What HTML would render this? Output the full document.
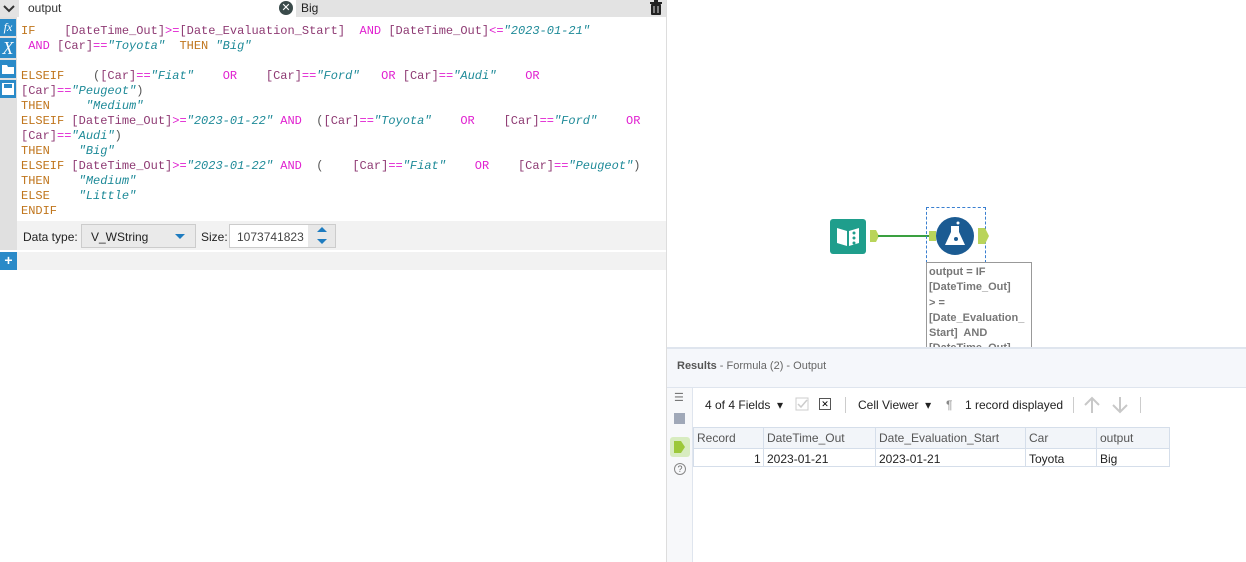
<!DOCTYPE html>
<html><head><meta charset="utf-8"><style>
*{margin:0;padding:0;box-sizing:border-box}
body{width:1246px;height:562px;overflow:hidden;background:#fff;font-family:"Liberation Sans",sans-serif;position:relative}
.abs{position:absolute}
pre{font-family:"Liberation Mono",monospace;font-size:12px;line-height:15px;color:#333}
.k{color:#c0751c}.f{color:#8e3a73}.o{color:#e020d0}.s{color:#1e8a98;font-style:italic}.p{color:#555}
.ui{font-size:12px;color:#222}
.td{position:absolute;font-size:12px;color:#222;padding-left:4px;line-height:20px}
</style></head><body>
<div class="abs" style="left:0;top:0;width:666px;height:17px;background:#e3e3e3"></div>
<svg class="abs" style="left:3px;top:4px" width="12" height="9"><path d="M1 2 L6 7 L11 2" stroke="#333" stroke-width="2" fill="none"/></svg>
<div class="abs" style="left:19px;top:0;width:277px;height:17px;background:#fff"></div>
<div class="abs ui" style="left:28px;top:1px;font-size:12px;color:#333">output</div>
<div class="abs" style="left:279px;top:1px;width:14px;height:14px;border-radius:7px;background:#3a4a4a;color:#fff;font-size:11px;line-height:14px;text-align:center">✕</div>
<div class="abs ui" style="left:301px;top:1px;font-size:12px">Big</div>
<svg class="abs" style="left:649px;top:0" width="14" height="16"><rect x="2" y="4" width="10" height="11" rx="1" fill="#222"/><rect x="1" y="2" width="12" height="2" fill="#222"/><rect x="5" y="0" width="4" height="2" fill="#222"/><line x1="5" y1="6" x2="5" y2="13" stroke="#ddd"/><line x1="9" y1="6" x2="9" y2="13" stroke="#ddd"/></svg>
<div class="abs" style="left:0;top:17px;width:17px;height:233px;background:#e0e0e0"></div>
<div class="abs" style="left:0;top:19px;width:16px;height:17px;background:#2a8ac8;color:#fff;font-style:italic;font-family:'Liberation Serif',serif;font-size:12px;text-align:center;line-height:16px">fx</div>
<div class="abs" style="left:0;top:38px;width:16px;height:20px;background:#2a8ac8;color:#fff;font-style:italic;font-family:'Liberation Serif',serif;font-size:18px;text-align:center;line-height:20px">X</div>
<div class="abs" style="left:0;top:60px;width:16px;height:18px;background:#2a8ac8"></div>
<svg class="abs" style="left:1px;top:62px" width="14" height="14"><path d="M1 3 H6 L7 5 H13 V12 H1Z" fill="#fff"/></svg>
<div class="abs" style="left:0;top:80px;width:16px;height:18px;background:#2a8ac8"></div>
<svg class="abs" style="left:1px;top:82px" width="14" height="14"><rect x="1" y="1" width="12" height="12" fill="#fff"/><rect x="3" y="2" width="8" height="4" fill="#2a8ac8"/></svg>
<pre class="abs" style="left:21px;top:24px"><span class="k">IF</span>    <span class="f">[DateTime_Out]</span><span class="o">&gt;=</span><span class="f">[Date_Evaluation_Start]</span>  <span class="o">AND</span> <span class="f">[DateTime_Out]</span><span class="o">&lt;=</span><span class="s">"2023-01-21"</span>
 <span class="o">AND</span> <span class="f">[Car]</span><span class="o">==</span><span class="s">"Toyota"</span>  <span class="k">THEN</span> <span class="s">"Big"</span>

<span class="k">ELSEIF</span>    <span class="p">(</span><span class="f">[Car]</span><span class="o">==</span><span class="s">"Fiat"</span>    <span class="o">OR</span>    <span class="f">[Car]</span><span class="o">==</span><span class="s">"Ford"</span>   <span class="o">OR</span> <span class="f">[Car]</span><span class="o">==</span><span class="s">"Audi"</span>    <span class="o">OR</span>
<span class="f">[Car]</span><span class="o">==</span><span class="s">"Peugeot"</span><span class="p">)</span>
<span class="k">THEN</span>     <span class="s">"Medium"</span>
<span class="k">ELSEIF</span> <span class="f">[DateTime_Out]</span><span class="o">&gt;=</span><span class="s">"2023-01-22"</span> <span class="o">AND</span>  <span class="p">(</span><span class="f">[Car]</span><span class="o">==</span><span class="s">"Toyota"</span>    <span class="o">OR</span>    <span class="f">[Car]</span><span class="o">==</span><span class="s">"Ford"</span>    <span class="o">OR</span>
<span class="f">[Car]</span><span class="o">==</span><span class="s">"Audi"</span><span class="p">)</span>
<span class="k">THEN</span>    <span class="s">"Big"</span>
<span class="k">ELSEIF</span> <span class="f">[DateTime_Out]</span><span class="o">&gt;=</span><span class="s">"2023-01-22"</span> <span class="o">AND</span>  <span class="p">(</span>    <span class="f">[Car]</span><span class="o">==</span><span class="s">"Fiat"</span>    <span class="o">OR</span>    <span class="f">[Car]</span><span class="o">==</span><span class="s">"Peugeot"</span><span class="p">)</span>
<span class="k">THEN</span>    <span class="s">"Medium"</span>
<span class="k">ELSE</span>    <span class="s">"Little"</span>
<span class="k">ENDIF</span></pre>
<div class="abs" style="left:17px;top:221px;width:649px;height:29px;background:#f2f2f2"></div>
<div class="abs ui" style="left:23px;top:230px">Data type:</div>
<div class="abs" style="left:81px;top:224px;width:115px;height:24px;border:1px solid #ccc;background:#eaeaea"></div>
<div class="abs ui" style="left:91px;top:230px">V_WString</div>
<div class="abs" style="left:175px;top:234px;width:0;height:0;border-left:5px solid transparent;border-right:5px solid transparent;border-top:5px solid #1e7cc0"></div>
<div class="abs ui" style="left:201px;top:230px">Size:</div>
<div class="abs" style="left:229px;top:224px;width:107px;height:24px;border:1px solid #ccc;background:#fff"></div>
<div class="abs ui" style="left:237px;top:230px;color:#444">1073741823</div>
<div class="abs" style="left:308px;top:225px;width:27px;height:22px;background:#e8e8e8"></div>
<div class="abs" style="left:317px;top:227px;border-left:5px solid transparent;border-right:5px solid transparent;border-bottom:5px solid #1e7cc0"></div>
<div class="abs" style="left:317px;top:239px;border-left:5px solid transparent;border-right:5px solid transparent;border-top:5px solid #1e7cc0"></div>
<div class="abs" style="left:0;top:250px;width:666px;height:2px;background:#fff"></div>
<div class="abs" style="left:0;top:252px;width:17px;height:18px;background:#2a8ac8;color:#fff;font-weight:bold;font-size:14px;text-align:center;line-height:17px">+</div>
<div class="abs" style="left:17px;top:252px;width:649px;height:18px;background:#f2f2f2"></div>
<div class="abs" style="left:666px;top:0;width:1px;height:562px;background:#ddd"></div>
<svg class="abs" style="left:829px;top:218px" width="40" height="38"><rect x="1" y="1" width="36" height="35" rx="3" fill="#1f9e8c"/><path d="M8 10 L18 13 L18 28 L8 25Z M30 10 L20 13 L20 28 L30 25Z" fill="#fff"/><circle cx="25" cy="15" r="1.5" fill="#1f9e8c"/><circle cx="25" cy="20" r="1.5" fill="#1f9e8c"/><circle cx="25" cy="25" r="1.5" fill="#1f9e8c"/></svg>
<svg class="abs" style="left:869px;top:229px" width="70" height="15"><path d="M1 1 H7 L10 7 L7 13 H1Z" fill="#b9d45a"/><line x1="9" y1="7" x2="60" y2="7" stroke="#3aa040" stroke-width="2"/><rect x="60" y="2" width="7" height="10" fill="#b9d45a"/></svg>
<div class="abs" style="left:926px;top:207px;width:60px;height:56px;border:1px dashed #3a7fd0"></div>
<svg class="abs" style="left:935px;top:216px" width="40" height="40"><circle cx="20" cy="20" r="19" fill="#1b5b92"/><path d="M16 10 H24 V16 L30 29 H10 L16 16Z" fill="#fff"/><circle cx="21" cy="23" r="2" fill="#1b5b92"/><circle cx="23" cy="7" r="1.5" fill="#fff"/></svg>
<svg class="abs" style="left:977px;top:227px" width="14" height="18"><path d="M1 1 H8 L12 9 L8 17 H1Z" fill="#b9d45a"/></svg>
<div class="abs" style="left:926px;top:262px;width:106px;height:90px;border:1px solid #999;background:#fff;font-size:11px;font-weight:bold;color:#777;line-height:15.3px;padding:2px 2px">output = IF<br>[DateTime_Out]<br>&gt; =<br>[Date_Evaluation_<br>Start]&nbsp; AND<br>[DateTime_Out]</div>
<div class="abs" style="left:667px;top:347px;width:579px;height:215px;background:#fff;border-top:2px solid #dfe5ee"></div>
<div class="abs" style="left:667px;top:349px;width:579px;height:39px;background:#f5f7fb;border-bottom:1px solid #dfe5ee"></div>
<div class="abs" style="left:677px;top:360px;font-size:11px;color:#666"><b style="color:#555">Results</b> - Formula (2) - Output</div>
<div class="abs" style="left:667px;top:388px;width:26px;height:174px;background:#f7f8fa;border-right:1px solid #dfe5ee"></div>
<div class="abs" style="left:674px;top:391px;font-size:11px;color:#777">☰</div>
<div class="abs" style="left:674px;top:413px;width:11px;height:11px;background:#a0a8b8"></div>
<div class="abs" style="left:670px;top:437px;width:20px;height:20px;background:#d8ecc0;border-radius:3px"></div>
<svg class="abs" style="left:674px;top:441px" width="12" height="12"><path d="M0 0 H7 L11 6 L7 12 H0Z" fill="#9cc83a"/></svg>
<div class="abs" style="left:674px;top:463px;width:12px;height:12px;border:1px solid #888;border-radius:6px;font-size:9px;text-align:center;line-height:10px;color:#666">?</div>
<div class="abs ui" style="left:705px;top:398px">4 of 4 Fields&nbsp; ▾</div>
<svg class="abs" style="left:795px;top:397px" width="14" height="14"><rect x="1" y="1" width="12" height="12" fill="none" stroke="#ccc"/><path d="M3 7 L6 10 L12 3" stroke="#ccc" fill="none" stroke-width="1.5"/></svg>
<div class="abs" style="left:819px;top:398px;width:12px;height:12px;border:1px solid #555;font-size:9px;text-align:center;line-height:10px">✕</div>
<div class="abs" style="left:845px;top:397px;width:1px;height:16px;background:#ccc"></div>
<div class="abs ui" style="left:858px;top:398px">Cell Viewer&nbsp; ▾</div>
<div class="abs ui" style="left:946px;top:398px;color:#888">¶</div>
<div class="abs ui" style="left:965px;top:398px">1 record displayed</div>
<div class="abs" style="left:1073px;top:397px;width:1px;height:16px;background:#ccc"></div>
<svg class="abs" style="left:1083px;top:396px" width="18" height="18"><path d="M9 17 V2 M2 9 L9 2 L16 9" stroke="#c8c8c8" stroke-width="2" fill="none"/></svg>
<svg class="abs" style="left:1111px;top:396px" width="18" height="18"><path d="M9 1 V16 M2 9 L9 16 L16 9" stroke="#c8c8c8" stroke-width="2" fill="none"/></svg>
<div class="abs" style="left:1140px;top:397px;width:1px;height:16px;background:#ccc"></div>
<div class="abs" style="left:693px;top:427px;width:477px;height:40px;border:1px solid #d5deea;background:#fff"></div>
<div class="abs" style="left:693px;top:427px;width:477px;height:22px;background:#f2f5f9;border:1px solid #d5deea"></div>
<div class="abs" style="left:763px;top:427px;width:1px;height:40px;background:#d5deea"></div>
<div class="abs" style="left:875px;top:427px;width:1px;height:40px;background:#d5deea"></div>
<div class="abs" style="left:1025px;top:427px;width:1px;height:40px;background:#d5deea"></div>
<div class="abs" style="left:1096px;top:427px;width:1px;height:40px;background:#d5deea"></div>
<div class="td" style="left:693px;top:428px;color:#555">Record</div>
<div class="td" style="left:763px;top:428px;color:#555">DateTime_Out</div>
<div class="td" style="left:875px;top:428px;color:#555">Date_Evaluation_Start</div>
<div class="td" style="left:1025px;top:428px;color:#555">Car</div>
<div class="td" style="left:1096px;top:428px;color:#555">output</div>
<div class="td" style="left:750px;top:449px">1</div>
<div class="td" style="left:763px;top:449px">2023-01-21</div>
<div class="td" style="left:875px;top:449px">2023-01-21</div>
<div class="td" style="left:1025px;top:449px">Toyota</div>
<div class="td" style="left:1096px;top:449px">Big</div>
</body></html>
